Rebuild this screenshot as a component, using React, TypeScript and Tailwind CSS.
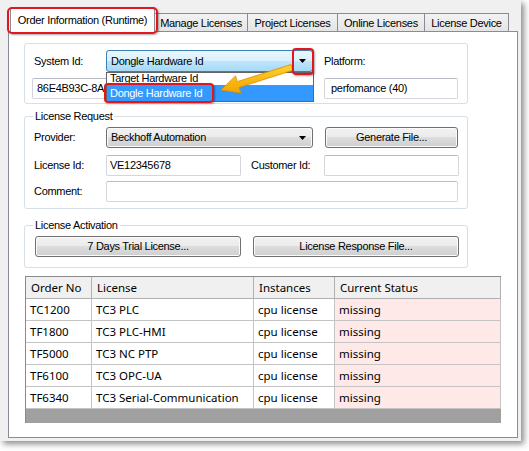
import React from "react";

const otherTabs: [string, string][] = [
  ["Manage Licenses", "w-[93px]"],
  ["Project Licenses", "w-[90px]"],
  ["Online Licenses", "w-[87px]"],
  ["License Device", "w-[84px]"],
];

const rows: [string, string][] = [
  ["TC1200", "TC3 PLC"],
  ["TF1800", "TC3 PLC-HMI"],
  ["TF5000", "TC3 NC PTP"],
  ["TF6100", "TC3 OPC-UA"],
  ["TF6340", "TC3 Serial-Communication"],
];

function DownTri() {
  return (
    <svg width="7" height="4" viewBox="0 0 7 4" className="block">
      <polygon points="0,0 7,0 3.5,4" fill="#000" />
    </svg>
  );
}

function Field({ className, children }: { className: string; children?: React.ReactNode }) {
  return (
    <div
      className={`flex items-center overflow-hidden whitespace-nowrap rounded-[2px] border border-[#d3d6dc] border-t-[#b9bcc4] bg-white ${className}`}
    >
      {children}
    </div>
  );
}

function Button({ className, children }: { className: string; children: React.ReactNode }) {
  return (
    <div
      className={`flex items-center justify-center rounded-[3px] border border-[#707070] bg-[linear-gradient(to_bottom,#f2f2f2_0%,#ebebeb_50%,#dddddd_50%,#cfcfcf_100%)] shadow-[inset_0_0_0_1px_#fbfbfb] ${className}`}
    >
      {children}
    </div>
  );
}

function GroupBox({ className, title, children }: { className: string; title?: string; children: React.ReactNode }) {
  return (
    <div className={`relative w-[444px] rounded-[3px] border border-[#d5dfe5] ${className}`}>
      {title && (
        <span className="absolute left-[8px] top-[-8px] bg-white px-[2px] leading-[14px]">{title}</span>
      )}
      {children}
    </div>
  );
}

export default function App() {
  return (
    <div className="relative h-[451px] w-[529px] bg-white font-['Liberation_Sans',Arial,sans-serif] text-[11px] tracking-[-0.3px] text-black">
      <div className="h-[441px] w-[521px] bg-[#f0f0f0] pt-[8px] shadow-[3px_3px_6px_rgba(0,0,0,0.45)]">
        {/* Tabs */}
        <div className="flex h-[23px] items-end pl-[10px]">
          <div className="relative z-10 -mb-[1px] flex h-[24px] w-[145px] items-center justify-center rounded-t-[2px] border border-b-0 border-[#898c95] bg-white pb-[1px]">
            Order Information (Runtime)
          </div>
          {otherTabs.map(([t, w]) => (
            <div
              key={t}
              className={`flex h-[18px] items-center justify-center border-r border-t border-[#898c95] bg-[linear-gradient(to_bottom,#f3f3f3,#e4e4e4)] pt-[1px] ${w}`}
            >
              {t}
            </div>
          ))}
        </div>

        {/* Panel */}
        <div className="ml-[8px] h-[407px] w-[510px] border border-[#898c95] bg-white pl-[15px] pt-[11px]">
          {/* Group 1 */}
          <GroupBox className="h-[61px]">
            <div className="pt-[6px]">
              <div className="flex h-[22px] items-center">
                <span className="ml-[9px] w-[72px]">System Id:</span>
                <div className="relative h-[22px] w-[207px]">
                  <div className="flex h-full w-full items-center justify-between rounded-[3px] border border-[#3c7fb1] bg-[linear-gradient(to_bottom,#eaf6fd_0%,#d9f0fc_50%,#bee6fd_50%,#a7d9f5_100%)] pl-[4px] pr-[6px]">
                    <span>Dongle Hardware Id</span>
                    <DownTri />
                  </div>
                  <div className="absolute left-0 top-[22px] z-20 flex h-[30px] w-[208px] flex-col border border-[#646464] bg-white">
                    <div className="h-[12px] overflow-hidden pl-[3px]">
                      <div className="-mt-[1px] h-[12px] leading-[12px]">Target Hardware Id</div>
                    </div>
                    <div className="flex h-[16px] items-center bg-[#3399ff] pl-[3px] text-white">Dongle Hardware Id</div>
                  </div>
                </div>
                <span className="ml-[11px]">Platform:</span>
              </div>
              <div className="mt-[6px] flex">
                <Field className="ml-[7px] h-[21px] w-[282px] pl-[4px]">86E4B93C-8A47-4F21-9C3B-00A1</Field>
                <Field className="ml-[10px] h-[21px] w-[134px] pl-[6px]">perfomance (40)</Field>
              </div>
            </div>
          </GroupBox>

          {/* Group 2 */}
          <GroupBox className="mt-[12px] h-[93px]" title="License Request">
            <div className="pt-[10px]">
              <div className="flex h-[21px] items-center">
                <span className="ml-[9px] w-[72px]">Provider:</span>
                <Button className="h-[21px] w-[207px] !justify-between pl-[4px] pr-[6px]">
                  <span>Beckhoff Automation</span>
                  <DownTri />
                </Button>
                <Button className="ml-[12px] h-[21px] w-[133px]">Generate File...</Button>
              </div>
              <div className="mt-[7px] flex h-[21px] items-center">
                <span className="ml-[9px] w-[72px]">License Id:</span>
                <Field className="h-[21px] w-[135px] pl-[3px]">VE12345678</Field>
                <span className="ml-[10px] w-[73px]">Customer Id:</span>
                <Field className="h-[21px] w-[135px]" />
              </div>
              <div className="mt-[5px] flex h-[21px] items-center">
                <span className="ml-[9px] w-[72px]">Comment:</span>
                <Field className="h-[21px] w-[352px]" />
              </div>
            </div>
          </GroupBox>

          {/* Group 3 */}
          <GroupBox className="mt-[16px] h-[43px]" title="License Activation">
            <div className="flex pt-[10px]">
              <Button className="ml-[10px] h-[21px] w-[206px]">7 Days Trial License...</Button>
              <Button className="ml-[12px] h-[21px] w-[206px]">License Response File...</Button>
            </div>
          </GroupBox>

          {/* Table */}
          <div className="ml-[1px] mt-[8px] flex h-[147px] w-[476px] flex-col border-l border-t border-[#8a8a8a] bg-[#a0a0a0] font-['Noto_Sans',sans-serif] text-[11.5px] tracking-normal">
            <div className="flex h-[22px] bg-[#f0f0f0]">
              {[
                ["Order No", "w-[66px]"],
                ["License", "w-[162px]"],
                ["Instances", "w-[81px]"],
                ["Current Status", "w-[166px]"],
              ].map(([t, w]) => (
                <div key={t} className={`flex items-center border-b border-r border-[#b0b0b0] pl-[5px] ${w}`}>
                  {t}
                </div>
              ))}
            </div>
            {rows.map(([no, lic]) => (
              <div key={no} className="flex h-[22px]">
                <div className="flex w-[66px] items-center border-b border-r border-[#c4c4c4] bg-white pl-[4px]">{no}</div>
                <div className="flex w-[162px] items-center border-b border-r border-[#c4c4c4] bg-white pl-[4px]">{lic}</div>
                <div className="flex w-[81px] items-center border-b border-r border-[#c4c4c4] bg-white pl-[4px]">cpu license</div>
                <div className="flex w-[166px] items-center border-b border-r border-[#c4c4c4] bg-[#ffe8e8] pl-[4px]">missing</div>
              </div>
            ))}
          </div>
        </div>
      </div>

      {/* Annotation overlays */}
      <svg
        className="pointer-events-none absolute left-[214px] top-[60px] z-30"
        width="92"
        height="42"
        viewBox="214 60 92 42"
      >
        <defs>
          <linearGradient id="ag" x1="0" y1="0" x2="0" y2="1">
            <stop offset="0" stopColor="#ffd22e" />
            <stop offset="1" stopColor="#f2a400" />
          </linearGradient>
        </defs>
        <polygon
          points="291.1,64.5 292.9,70.3 239.1,87.4 240.9,93.1 221,90 235.5,75.9 237.3,81.6"
          fill="url(#ag)"
          stroke="#d98e00"
          strokeWidth="0.8"
          strokeLinejoin="round"
        />
      </svg>
      <div className="pointer-events-none absolute left-[7px] top-[7px] z-30 h-[27px] w-[151px] rounded-[5px] border-2 border-[#e3161d] shadow-[1px_1px_2px_rgba(0,0,0,0.35)]" />
      <div className="pointer-events-none absolute left-[292px] top-[48px] z-30 h-[27px] w-[22px] rounded-[4px] border-2 border-[#e3161d] shadow-[1px_1px_2px_rgba(0,0,0,0.35)]" />
      <div className="pointer-events-none absolute left-[104px] top-[83px] z-30 h-[20px] w-[110px] rounded-[4px] border-2 border-[#e3161d] shadow-[1px_1px_2px_rgba(0,0,0,0.35)]" />
    </div>
  );
}
